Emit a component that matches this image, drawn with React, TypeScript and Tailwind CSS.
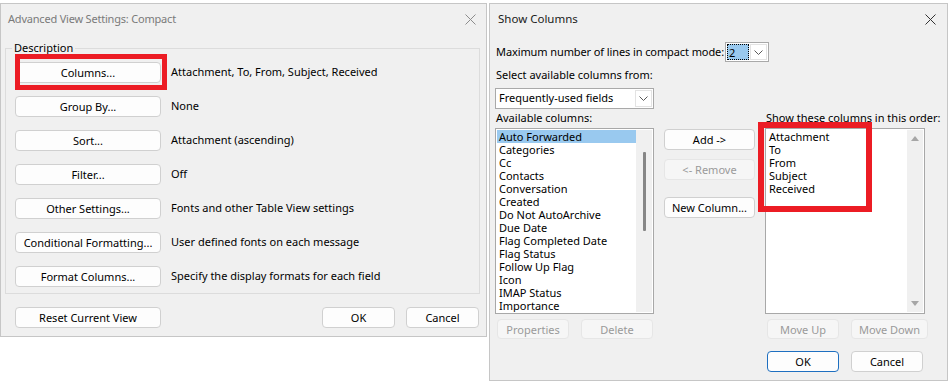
import clsx from 'clsx';

const availableColumns = [
  'Auto Forwarded',
  'Categories',
  'Cc',
  'Contacts',
  'Conversation',
  'Created',
  'Do Not AutoArchive',
  'Due Date',
  'Flag Completed Date',
  'Flag Status',
  'Follow Up Flag',
  'Icon',
  'IMAP Status',
  'Importance',
];

const shownColumns = ['Attachment', 'To', 'From', 'Subject', 'Received'];

const settings = [
  { label: 'Columns...', value: 'Attachment, To, From, Subject, Received', marked: true },
  { label: 'Group By...', value: 'None' },
  { label: 'Sort...', value: 'Attachment (ascending)' },
  { label: 'Filter...', value: 'Off' },
  { label: 'Other Settings...', value: 'Fonts and other Table View settings' },
  { label: 'Conditional Formatting...', value: 'User defined fonts on each message' },
  { label: 'Format Columns...', value: 'Specify the display formats for each field' },
];

function Btn({
  label,
  className,
  disabled,
  primary,
}: {
  label: string;
  className?: string;
  disabled?: boolean;
  primary?: boolean;
}) {
  return (
    <button
      disabled={disabled}
      className={clsx(
        'flex shrink-0 items-center justify-center rounded-[4px] border text-[11px] leading-none',
        disabled
          ? 'border-[#e6e6e6] bg-[#f6f6f6] text-[#9a9a9a]'
          : primary
            ? 'border-[#1e6fc0] bg-[#fdfdfd] text-black'
            : 'border-[#d0d0d0] bg-[#fdfdfd] text-black',
        className
      )}
    >
      {label}
    </button>
  );
}

function CloseIcon({ color }: { color: string }) {
  return (
    <svg width="11" height="11" viewBox="0 0 11 11" className="shrink-0">
      <path d="M0.5 0.5 L10.5 10.5 M10.5 0.5 L0.5 10.5" stroke={color} strokeWidth="1" />
    </svg>
  );
}

function Chevron() {
  return (
    <svg width="9" height="5" viewBox="0 0 9 5">
      <polyline points="0.5,0.5 4.5,4.5 8.5,0.5" fill="none" stroke="#5a5a5a" strokeWidth="1" />
    </svg>
  );
}

function AdvancedViewSettings() {
  return (
    <div className="flex h-[334px] w-[487px] shrink-0 flex-col border border-[#c6c6c6] bg-[#f0f0f0]">
      {/* Title bar */}
      <div className="flex h-[30px] items-center justify-between pl-[7px] pr-[10px]">
        <span className="text-[11px] tracking-[-0.2px] text-[#7a7a7a]">Advanced View Settings: Compact</span>
        <CloseIcon color="#8c8c8c" />
      </div>

      {/* Description group */}
      <fieldset className="ml-[4px] mt-[6px] w-[475px] border border-[#dcdcdc]">
        <legend className="ml-[6px] px-[2px] leading-[16px]">Description</legend>
        <div className="flex flex-col gap-[13px] pb-[6px] pl-[9px] pt-[6px]">
          {settings.map((s) => (
            <div key={s.label} className="relative flex items-center">
              <Btn label={s.label} className="h-[21px] w-[146px]" />
              <span className="ml-[10px] whitespace-nowrap">{s.value}</span>
              {s.marked && (
                <div className="absolute left-0 top-[-8px] h-[36px] w-[152px] border-[5px] border-[#ec1c24]" />
              )}
            </div>
          ))}
        </div>
      </fieldset>

      {/* Footer */}
      <div className="mt-[13px] flex items-center pl-[14px] pr-[7px]">
        <Btn label="Reset Current View" className="h-[21px] w-[146px]" />
        <Btn label="OK" className="ml-auto h-[21px] w-[73px]" />
        <Btn label="Cancel" className="ml-[11px] h-[21px] w-[73px]" />
      </div>
    </div>
  );
}

function ShowColumns() {
  return (
    <div className="ml-[2px] flex h-[378px] w-[459px] shrink-0 flex-col border border-[#c6c6c6] bg-[#f0f0f0]">
      {/* Title bar */}
      <div className="flex h-[30px] items-center justify-between pl-[8px] pr-[11px]">
        <span className="text-[11.5px] text-[#1a1a1a]">Show Columns</span>
        <CloseIcon color="#333333" />
      </div>

      <div className="flex flex-col pl-[5px]">
        {/* Max lines */}
        <div className="mt-[8px] flex h-[20px] items-center">
          <span className="w-[230px] whitespace-nowrap pl-[1px] tracking-[-0.1px]">
            Maximum number of lines in compact mode:
          </span>
          <div className="flex h-[20px] w-[44px] items-center border border-[#a9a9a9] bg-white p-[1px]">
            <div className="flex h-[16px] w-[22px] items-center border border-dotted border-black bg-[#99c9ef] pl-[1px] leading-none">
              2
            </div>
            <div className="ml-auto flex h-[16px] w-[17px] items-center justify-center border border-[#e3e3e3]">
              <Chevron />
            </div>
          </div>
        </div>

        <span className="mt-[5px] pl-[1px] leading-[16px]">Select available columns from:</span>

        <div className="mt-[5px] flex h-[21px] w-[159px] items-center border border-[#a9a9a9] bg-white pl-[3px] pr-[1px]">
          <span className="flex-1">Frequently-used fields</span>
          <div className="flex h-[17px] w-[17px] items-center justify-center border border-[#e3e3e3]">
            <Chevron />
          </div>
        </div>

        <div className="mt-[1px] grid grid-cols-[159px_91px_160px] gap-x-[10px]">
          {/* labels */}
          <span className="pl-[1px] leading-[16px]">Available columns:</span>
          <span />
          <span className="whitespace-nowrap pl-[1px] leading-[16px]">Show these columns in this order:</span>

          {/* Available list */}
          <div className="mt-[2px] flex h-[186px] border border-[#a8a8a8] bg-white p-[1px]">
            <div className="flex flex-1 flex-col overflow-hidden">
              {availableColumns.map((c, i) => (
                <div
                  key={c}
                  className={clsx('h-[13px] shrink-0 whitespace-nowrap pl-[2px] leading-[13px]', i === 0 && 'bg-[#99c9ef]')}
                >
                  {c}
                </div>
              ))}
            </div>
            <div className="flex w-[16px] justify-center bg-[#f0f0f0]">
              <div className="mt-[22px] h-[79px] w-[3px] rounded-[1px] bg-[#868686]" />
            </div>
          </div>

          {/* Middle buttons */}
          <div className="mt-[2px] flex flex-col">
            <Btn label="Add ->" className="mt-[1px] h-[21px] w-full" />
            <Btn label="<- Remove" disabled className="mt-[9px] h-[21px] w-full" />
            <Btn label="New Column..." className="mt-[17px] h-[21px] w-full" />
          </div>

          {/* Shown list */}
          <div className="relative mt-[2px]">
            <div className="flex h-[186px] border border-[#a8a8a8] bg-white p-[1px]">
              <div className="flex flex-1 flex-col">
                {shownColumns.map((c) => (
                  <div key={c} className="h-[13px] whitespace-nowrap pl-[2px] leading-[13px]">
                    {c}
                  </div>
                ))}
              </div>
              <div className="flex w-[16px] flex-col items-center justify-between bg-[#f0f0f0] py-[6px]">
                <svg width="8" height="5" viewBox="0 0 8 5">
                  <polygon points="0,5 4,0 8,5" fill="#a6a6a6" />
                </svg>
                <svg width="8" height="5" viewBox="0 0 8 5">
                  <polygon points="0,0 8,0 4,5" fill="#a6a6a6" />
                </svg>
              </div>
            </div>
            <div className="absolute left-[-7px] top-[-6px] h-[90px] w-[114px] border-[6px] border-[#ec1c24]" />
          </div>

          {/* Bottom buttons */}
          <div className="mt-[5px] flex pl-[2px]">
            <Btn label="Properties" disabled className="h-[20px] w-[72px]" />
            <Btn label="Delete" disabled className="ml-[12px] h-[20px] w-[72px]" />
          </div>
          <span />
          <div className="mt-[5px] flex pl-[2px]">
            <Btn label="Move Up" disabled className="h-[20px] w-[72px]" />
            <Btn label="Move Down" disabled className="ml-[12px] h-[20px] w-[77px]" />
          </div>

          <span />
          <span />
          <div className="mt-[12px] flex pl-[2px]">
            <Btn label="OK" primary className="h-[21px] w-[72px]" />
            <Btn label="Cancel" className="ml-[12px] h-[21px] w-[72px]" />
          </div>
        </div>
      </div>
    </div>
  );
}

export default function App() {
  return (
    <div className="flex h-[386px] w-[952px] items-start overflow-hidden bg-white pt-[3px] font-['Noto_Sans',sans-serif] text-[11px] text-black">
      <AdvancedViewSettings />
      <ShowColumns />
    </div>
  );
}
